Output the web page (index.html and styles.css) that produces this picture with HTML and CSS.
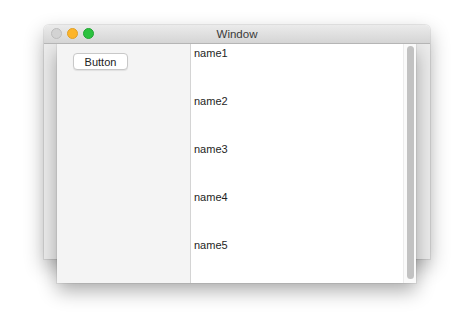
FILE: index.html
```html
<!DOCTYPE html>
<html>
<head>
    <title>Window</title>
    <link rel="stylesheet" href="styles.css">
</head>
<body>
    <div class="window">
        <div class="titlebar">
            <div class="lights">
                <span class="light close"></span>
                <span class="light min"></span>
                <span class="light max"></span>
            </div>
            <div class="title">Window</div>
        </div>
        <div class="window-body">
            <div class="sheet">
                <div class="sidebar">
                    <button class="btn">Button</button>
                </div>
                <div class="list">
                    <div class="rows">
                        <div class="row">name1</div>
                        <div class="row">name2</div>
                        <div class="row">name3</div>
                        <div class="row">name4</div>
                        <div class="row">name5</div>
                    </div>
                    <div class="scroll-track">
                        <div class="scroll-thumb"></div>
                    </div>
                </div>
            </div>
        </div>
    </div>
</body>
</html>
```

FILE: styles.css
```css
html, body {
    height: 323px;
}

body {
    margin: 0;
    background: #ffffff;
    font-family: 'Liberation Sans', Arial, sans-serif;
}

.window {
    width: 386px;
    margin: 25px 0 0 44px;
    border-radius: 5px 5px 0 0;
    box-shadow: 0 8px 20px rgba(0,0,0,0.3), 0 0 0 1px rgba(0,0,0,0.08);
}

.titlebar {
    position: relative;
    height: 18px;
    background: linear-gradient(#ebebeb, #d5d5d5);
    border-bottom: 1px solid #b5b5b5;
    border-radius: 5px 5px 0 0;
    display: flex;
    align-items: center;
    justify-content: center;
}

.lights {
    position: absolute;
    left: 7px;
    top: 3px;
    display: flex;
    gap: 5px;
}

.light {
    width: 11px;
    height: 11px;
    border-radius: 50%;
    box-sizing: border-box;
}

.close { background: #d3d3d3; border: 1px solid #bdbdbd; }
.min { background: #fdb52a; border: 1px solid #e0a028; }
.max { background: #2bc23f; border: 1px solid #22a534; }

.title {
    font-size: 11.5px;
    color: #3a3a3a;
}

.window-body {
    height: 215px;
    background: #ececec;
    padding: 0 14px 0 13px;
}

.sheet {
    height: 239px;
    display: flex;
    background: #ffffff;
    box-shadow: 0 8px 18px rgba(0,0,0,0.32), 0 0 0 1px rgba(0,0,0,0.06);
}

.sidebar {
    width: 134px;
    background: #f4f4f4;
    border-right: 1px solid #d4d4d4;
    padding: 9px 0 0 16px;
    box-sizing: border-box;
}

.btn {
    display: block;
    width: 55px;
    height: 17px;
    padding: 0;
    font-family: 'Liberation Sans', Arial, sans-serif;
    font-size: 11px;
    color: #222;
    background: #ffffff;
    border: 1px solid #c8c8c8;
    border-radius: 4px;
    box-shadow: 0 1px 1px rgba(0,0,0,0.08);
}

.list {
    flex: 1;
    display: flex;
}

.rows {
    flex: 1;
    padding: 3px 0 0 3px;
}

.row {
    height: 48px;
    font-size: 11px;
    color: #1e1e1e;
}

.scroll-track {
    width: 13px;
    border-left: 1px solid #ececec;
    background: #fafafa;
    padding: 2px 0 4px 3px;
    box-sizing: border-box;
}

.scroll-thumb {
    width: 7px;
    height: 100%;
    background: #c2c2c2;
    border-radius: 4px;
}
```
